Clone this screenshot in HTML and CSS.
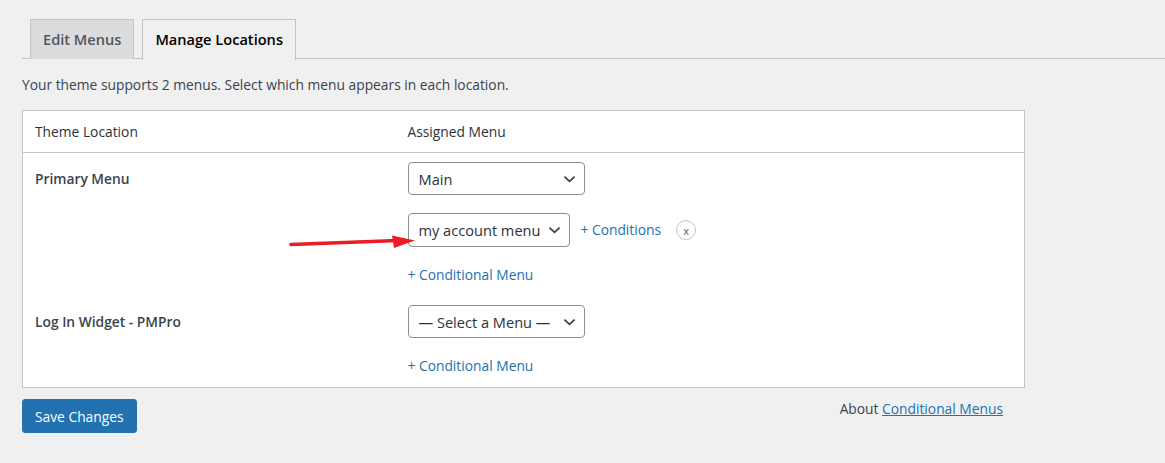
FILE: index.html
```html
<!DOCTYPE html>
<html lang="en">
<head>
    <meta charset="UTF-8">
    <meta name="viewport" content="width=device-width, initial-scale=1.0">
    <title>Menus - Manage Locations</title>
    <link rel="stylesheet" href="styles.css">
</head>
<body>
    <div class="wrap">
        <nav class="nav-tabs">
            <a class="nav-tab" href="#">Edit Menus</a>
            <a class="nav-tab active" href="#">Manage Locations</a>
        </nav>

        <p class="intro">Your theme supports 2 menus. Select which menu appears in each location.</p>

        <table class="locations">
            <thead>
                <tr>
                    <th class="col-location">Theme Location</th>
                    <th>Assigned Menu</th>
                </tr>
            </thead>
            <tbody>
                <tr>
                    <td class="col-location"><span class="loc-label">Primary Menu</span></td>
                    <td>
                        <div class="menu-stack">
                            <div class="select wide">
                                <span>Main</span>
                                <svg class="chevron" viewBox="0 0 14 8"><path d="M1.5 1.5l5.5 5 5.5-5"/></svg>
                            </div>
                            <div class="cond-row">
                                <div class="select">
                                    <span>my account menu</span>
                                    <svg class="chevron" viewBox="0 0 14 8"><path d="M1.5 1.5l5.5 5 5.5-5"/></svg>
                                </div>
                                <a class="link" href="#">+ Conditions</a>
                                <span class="remove">x</span>
                            </div>
                            <a class="link" href="#">+ Conditional Menu</a>
                        </div>
                    </td>
                </tr>
                <tr>
                    <td class="col-location"><span class="loc-label">Log In Widget - PMPro</span></td>
                    <td>
                        <div class="menu-stack">
                            <div class="select wide">
                                <span>&mdash; Select a Menu &mdash;</span>
                                <svg class="chevron" viewBox="0 0 14 8"><path d="M1.5 1.5l5.5 5 5.5-5"/></svg>
                            </div>
                            <a class="link" href="#">+ Conditional Menu</a>
                        </div>
                    </td>
                </tr>
            </tbody>
        </table>

        <div class="footer-row">
            <button class="button-primary">Save Changes</button>
            <p class="about">About <a href="#">Conditional Menus</a></p>
        </div>

        <!-- annotation arrow drawn over the screenshot -->
        <svg class="arrow" viewBox="0 0 1165 463">
            <path d="M291 244.5 L398 240.5" stroke="#ec1c24" stroke-width="3.4" stroke-linecap="round" fill="none"/>
            <polygon points="392,235.5 415,240.5 394,248" fill="#ec1c24"/>
        </svg>
    </div>
</body>
</html>
```

FILE: styles.css
```css
* {
    margin: 0;
    padding: 0;
    box-sizing: border-box;
}

body {
    background: #f0f0f1;
    color: #3c434a;
    font-family: 'Open Sans', 'Noto Sans', sans-serif;
    font-size: 13.8px;
    line-height: 20px;
}

.wrap {
    position: relative;
    height: 463px;
    padding: 19px 0 0 22px;
}

.nav-tabs {
    display: flex;
    gap: 8px;
    padding-left: 8px;
    border-bottom: 1px solid #c3c4c7;
    height: 40px;
}

.nav-tab {
    display: block;
    height: 40px;
    padding: 9px 12px 0;
    border: 1px solid #c3c4c7;
    border-bottom: none;
    background: #dcdcde;
    color: #50575e;
    font-size: 14.6px;
    font-weight: 600;
    text-decoration: none;
}

.nav-tab.active {
    background: #f0f0f1;
    color: #000;
    height: 41px;
    margin-bottom: -1px;
}

.intro {
    margin: 16px 0 15px;
}

.locations {
    width: 1003px;
    background: #fff;
    border: 1px solid #c3c4c7;
    border-collapse: collapse;
}

.locations th {
    text-align: left;
    font-weight: 400;
    color: #2c3338;
    height: 42px;
    padding: 0 12px;
    border-bottom: 1px solid #c3c4c7;
}

.locations td {
    vertical-align: top;
    padding: 9px 12px 11px;
}

.col-location {
    width: 373px;
}

.loc-label {
    display: block;
    line-height: 33px;
    font-weight: 600;
    color: #3c434a;
}

.menu-stack {
    display: flex;
    flex-direction: column;
    align-items: flex-start;
    gap: 18px;
}

.cond-row {
    display: flex;
    align-items: center;
}

.select {
    display: flex;
    align-items: center;
    justify-content: space-between;
    gap: 8px;
    height: 34px;
    padding: 0 8px 0 10px;
    border: 1px solid #8c8f94;
    border-radius: 4px;
    background: #fff;
    color: #2c3338;
    font-size: 14.6px;
}

.select.wide {
    width: 177px;
    height: 33px;
}

.chevron {
    width: 13px;
    height: 8px;
    flex-shrink: 0;
}

.chevron path {
    fill: none;
    stroke: #3c434a;
    stroke-width: 2;
}

.link {
    color: #2271b1;
    text-decoration: none;
}

.cond-row .link {
    margin-left: 10px;
}

.remove {
    display: flex;
    align-items: center;
    justify-content: center;
    width: 20px;
    height: 20px;
    margin-left: 15px;
    border: 1px solid #c3c4c7;
    border-radius: 50%;
    background: #fff;
    color: #50575e;
    font-size: 11px;
    line-height: 1;
}

.footer-row {
    display: flex;
    justify-content: space-between;
    align-items: flex-start;
    width: 1003px;
    margin-top: 11px;
    padding-right: 22px;
}

.button-primary {
    height: 34px;
    padding: 0 12px;
    background: #2271b1;
    border: 1px solid #2271b1;
    border-radius: 3px;
    color: #fff;
    font-family: inherit;
    font-size: 13.8px;
}

.about {
    color: #3c434a;
}

.about a {
    color: #2271b1;
}

.arrow {
    position: absolute;
    left: 0;
    top: 0;
    width: 1165px;
    height: 463px;
    pointer-events: none;
}
```
